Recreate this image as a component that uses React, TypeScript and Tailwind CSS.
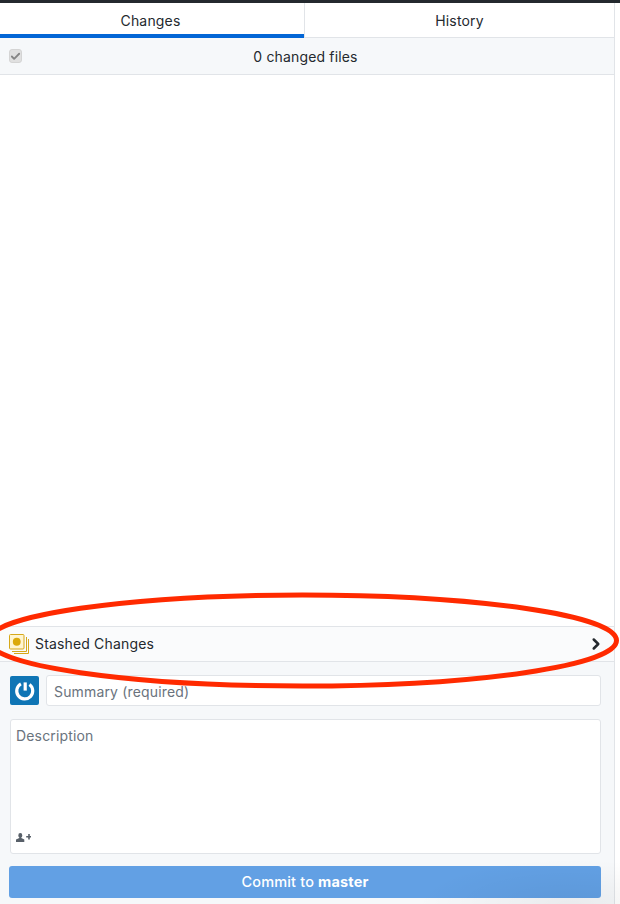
import { Check, ChevronRight } from "lucide-react";

function StashIcon() {
  return (
    <svg width="20" height="20" viewBox="0 0 20 20" fill="none" className="shrink-0">
      <path d="M19.5 5v14.5H5" stroke="#d6a81a" strokeWidth="1" />
      <path d="M17.5 3v14.5H3" stroke="#d6a81a" strokeWidth="1" />
      <rect x="0.5" y="0.5" width="14.5" height="14.5" rx="1" fill="#fff5d1" stroke="#d6a81a" />
      <circle cx="7.75" cy="7.75" r="3.9" fill="#dba90b" />
    </svg>
  );
}

function GravatarIcon() {
  return (
    <div className="flex h-[29px] w-[29px] shrink-0 items-center justify-center rounded-[2px] bg-[#0f75b5]">
      <svg width="21" height="21" viewBox="0 0 21 21" fill="none">
        <path d="M11.2 2.4v8.2" stroke="#fff" strokeWidth="3.2" />
        <path d="M6.9 3.9a8 8 0 1 0 8.6 .6" stroke="#fff" strokeWidth="3.2" />
      </svg>
    </div>
  );
}

function AddUserIcon() {
  return (
    <svg width="15" height="9" viewBox="0 0 15 9" fill="#586069">
      <path d="M2.3 2.4a2 2.4 0 1 1 4 0c0 1-.4 1.7-1 2.1v.6l3 1.3V9H0V6.4l3.3-1.3v-.6c-.6-.4-1-1.1-1-2.1z" />
      <path d="M10.2 3h2V1h1.6v2H15v1.6h-1.2v2h-1.6v-2h-2z" />
    </svg>
  );
}

export default function App() {
  return (
    <div className="relative h-[904px] w-[620px] overflow-hidden bg-white font-['Inter',sans-serif] text-[14px] tracking-[0.16px] text-[#24292e]">
      <div className="flex h-full w-[615px] flex-col border-r border-[#e1e4e8]">
        <div className="h-[3px] w-[620px] shrink-0 bg-[#24292e]" />

        <div className="flex h-[35px] shrink-0">
          <div className="flex w-[304px] items-center justify-center border-b-[4px] border-[#0366d6] pr-[3px] pt-[4px]">Changes</div>
          <div className="flex flex-1 items-center justify-center border-b border-l border-[#e1e4e8] pt-[1px]">History</div>
        </div>

        <div className="relative flex h-[37px] shrink-0 items-center justify-center border-b border-[#e1e4e8] bg-[#f6f8fa] pr-[3px] pt-[1px]">
          <div className="absolute left-[9px] top-[11px] flex h-[14px] w-[13px] items-center justify-center rounded-[3px] border border-[#d4d4d4] bg-[#e0e0e0]">
            <Check size={11} strokeWidth={4} className="text-[#858585]" />
          </div>
          <span>0 changed files</span>
        </div>

        <div className="flex-1" />

        <div className="flex h-[36px] shrink-0 items-center gap-[6px] border-y border-[#e1e4e8] bg-[#fafbfc] pl-[9px] pr-[9px]">
          <StashIcon />
          <span className="flex-1 pb-[2px]">Stashed Changes</span>
          <ChevronRight size={18} strokeWidth={3.4} className="text-[#24292e]" />
        </div>

        <div className="flex h-[242px] shrink-0 flex-col bg-[#f6f8fa] pl-[10px] pr-[13px] pt-[13px]">
          <div className="flex items-center gap-[7px]">
            <GravatarIcon />
            <div className="flex h-[31px] flex-1 items-center rounded-[3px] border border-[#e1e4e8] bg-white px-[7px] pt-[1px] text-[#6a737d]">
              Summary (required)
            </div>
          </div>

          <div className="mt-[13px] flex h-[135px] flex-col justify-between rounded-[3px] border border-[#e1e4e8] bg-white pb-[11px] pl-[5px] pt-[5px] text-[#6a737d]">
            <span>Description</span>
            <AddUserIcon />
          </div>

          <div className="-ml-[1px] mt-[12px] flex h-[32px] items-center justify-center rounded-[3px] bg-[#62a0e4] text-[14.5px] font-medium text-white">
            <span>
              Commit to <strong className="font-bold">master</strong>
            </span>
          </div>
        </div>
      </div>

      {/* faint shadow in the bottom corner of the screenshot */}
      <div className="pointer-events-none absolute bottom-0 right-0 h-[44px] w-[200px] bg-[radial-gradient(ellipse_at_75%_100%,rgba(0,0,0,0.05),transparent_72%)]" />

      {/* red annotation drawn over the screenshot */}
      <svg className="pointer-events-none absolute left-0 top-[585px]" width="620" height="110" viewBox="0 0 620 110" fill="none">
        <ellipse cx="302.5" cy="55.5" rx="314" ry="45.5" stroke="#ff2a00" strokeWidth="5" />
      </svg>
    </div>
  );
}
